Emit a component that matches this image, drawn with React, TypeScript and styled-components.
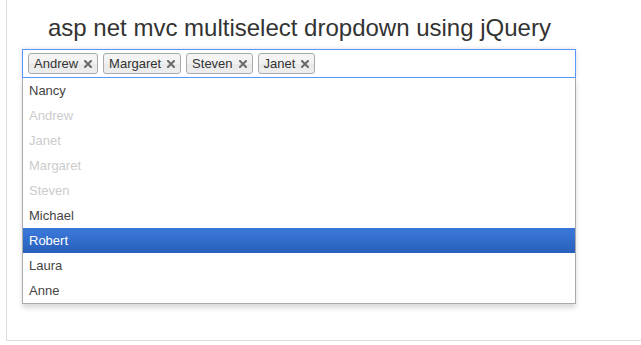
import React, { FC } from 'react';
import styled, { createGlobalStyle } from 'styled-components';

const GlobalStyle = createGlobalStyle`
  html, body {
    margin: 0;
    padding: 0;
    background: #fff;
    font-family: "Liberation Sans", Arial, sans-serif;
  }
`;

const Page = styled.div`
  margin-left: 6px;
  height: 341px;
  border-left: 1px solid #ddd;
  border-bottom: 1px solid #ddd;
  padding-left: 15px;
  box-sizing: border-box;
`;

const Title = styled.h2`
  margin: 0;
  padding: 11px 0 0 26px;
  height: 49px;
  box-sizing: border-box;
  font-size: 24px;
  line-height: 33px;
  font-weight: normal;
  color: #333;
`;

const Container = styled.div`
  width: 554px;
  font-size: 13px;
`;

const Choices = styled.div`
  display: flex;
  align-items: center;
  gap: 5px;
  height: 29px;
  box-sizing: border-box;
  padding: 0 5px;
  border: 1px solid #5897fb;
  background: #fff;
  box-shadow: 0 0 5px rgba(0, 0, 0, 0.15);
`;

const Chip = styled.div`
  display: inline-flex;
  align-items: center;
  gap: 6px;
  height: 21px;
  box-sizing: border-box;
  padding: 0 5px;
  border: 1px solid #aaa;
  border-radius: 3px;
  background: linear-gradient(#f4f4f4 20%, #f0f0f0 50%, #e8e8e8 52%, #eee 100%);
  color: #333;
  line-height: 13px;
`;

const Drop = styled.ul`
  list-style: none;
  margin: 0;
  padding: 0;
  border: 1px solid #aaa;
  border-top: 0;
  background: #fff;
  box-shadow: 0 4px 5px rgba(0, 0, 0, 0.15);
`;

const Option = styled.li<{ $state: 'normal' | 'selected' | 'active' }>`
  height: 25px;
  padding: 0 6px;
  line-height: 25px;
  color: ${(p) => (p.$state === 'selected' ? '#ccc' : p.$state === 'active' ? '#fff' : '#444')};
  background: ${(p) =>
    p.$state === 'active' ? 'linear-gradient(#3875d7 20%, #2a62bc 90%)' : 'transparent'};
`;

const CloseIcon: FC = () => (
  <svg width="8" height="8" viewBox="0 0 8 8">
    <path d="M1 1 L7 7 M7 1 L1 7" stroke="#6a6a6a" strokeWidth="2" strokeLinecap="square" />
  </svg>
);

const chosen = ['Andrew', 'Margaret', 'Steven', 'Janet'];

const options: { name: string; state: 'normal' | 'selected' | 'active' }[] = [
  { name: 'Nancy', state: 'normal' },
  { name: 'Andrew', state: 'selected' },
  { name: 'Janet', state: 'selected' },
  { name: 'Margaret', state: 'selected' },
  { name: 'Steven', state: 'selected' },
  { name: 'Michael', state: 'normal' },
  { name: 'Robert', state: 'active' },
  { name: 'Laura', state: 'normal' },
  { name: 'Anne', state: 'normal' },
];

const App: FC = () => (
  <>
    <GlobalStyle />
    <Page>
      <Title>asp net mvc multiselect dropdown using jQuery</Title>
      <Container>
        <Choices>
          {chosen.map((name) => (
            <Chip key={name}>
              {name}
              <CloseIcon />
            </Chip>
          ))}
        </Choices>
        <Drop>
          {options.map((o) => (
            <Option key={o.name} $state={o.state}>
              {o.name}
            </Option>
          ))}
        </Drop>
      </Container>
    </Page>
  </>
);

export default App;
